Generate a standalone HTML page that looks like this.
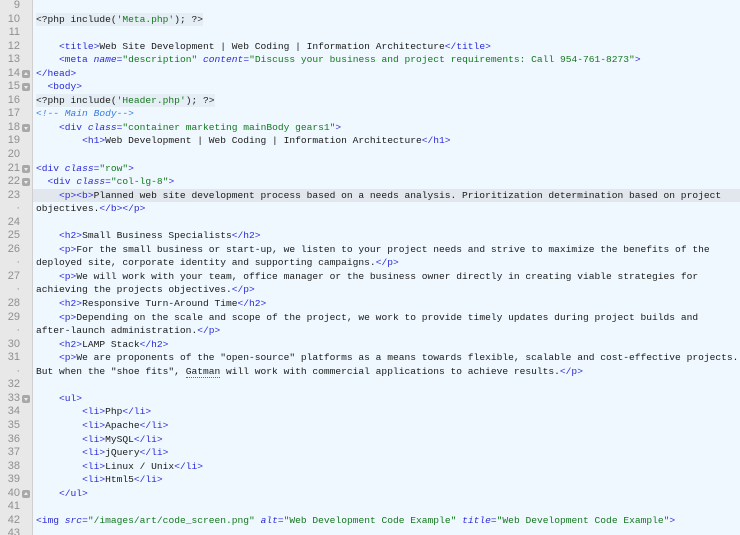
<!DOCTYPE html>
<html><head><meta charset="utf-8"><style>
html,body{margin:0;padding:0;width:740px;height:535px;overflow:hidden;background:#eff8ff;}
body{font-family:"Liberation Mono",monospace;font-size:9.6px;color:#1a1a1a;position:relative;}
#g{position:absolute;left:0;top:0;width:32px;height:535px;background:#e8e8e8;border-right:1px solid #cfcfcf;}
#c{position:absolute;left:0;top:-1px;width:740px;}
.r{height:13.56px;line-height:13.56px;white-space:pre;position:relative;}
.n{position:absolute;left:0;width:20px;text-align:right;color:#909090;font-family:"Liberation Sans",sans-serif;font-size:11px;}
.f{position:absolute;left:22px;top:3px;width:8px;height:8px;background:#a8a8a8;border-radius:2px;}
.f::after{content:"";position:absolute;left:2px;top:3px;border-left:2px solid transparent;border-right:2px solid transparent;border-top:3px solid #eee;}
.f.u::after{border-top:none;border-bottom:3px solid #eee;top:2px;}
.t{position:absolute;left:36px;}
.hl{background:#e6eef5;}
.cur{position:absolute;left:33px;right:0;top:0;height:13.56px;background:#e1e7ed;}
b,.k{color:#2a2ad6;font-weight:normal;}
i{color:#2a2ad6;}
.s{color:#14781e;}
.cm{color:#3a7ee0;font-style:italic;}
.sq{border-bottom:1px dotted #e03030;}
</style></head><body>
<div id="g"></div>
<div id="c">
<div class="r"><span class="n">9</span></div>
<div class="r"><span class="n">10</span><span class="t hl">&lt;?php include(<span class="s">'Meta.php'</span>); ?&gt;</span></div>
<div class="r"><span class="n">11</span></div>
<div class="r"><span class="n">12</span><span class="t">    <b>&lt;title&gt;</b>Web Site Development | Web Coding | Information Architecture<b>&lt;/title&gt;</b></span></div>
<div class="r"><span class="n">13</span><span class="t">    <b>&lt;meta</b> <i>name</i><b>=</b><span class="s">"description"</span> <i>content</i><b>=</b><span class="s">"Discuss your business and project requirements: Call 954-761-8273"</span><b>&gt;</b></span></div>
<div class="r"><span class="n">14</span><span class="f u"></span><span class="t"><b>&lt;/head&gt;</b></span></div>
<div class="r"><span class="n">15</span><span class="f"></span><span class="t">  <b>&lt;body&gt;</b></span></div>
<div class="r"><span class="n">16</span><span class="t hl">&lt;?php include(<span class="s">'Header.php'</span>); ?&gt;</span></div>
<div class="r"><span class="n">17</span><span class="t cm">&lt;!-- Main Body--&gt;</span></div>
<div class="r"><span class="n">18</span><span class="f"></span><span class="t">    <b>&lt;div</b> <i>class</i><b>=</b><span class="s">"container marketing mainBody gears1"</span><b>&gt;</b></span></div>
<div class="r"><span class="n">19</span><span class="t">        <b>&lt;h1&gt;</b>Web Development | Web Coding | Information Architecture<b>&lt;/h1&gt;</b></span></div>
<div class="r"><span class="n">20</span></div>
<div class="r"><span class="n">21</span><span class="f"></span><span class="t"><b>&lt;div</b> <i>class</i><b>=</b><span class="s">"row"</span><b>&gt;</b></span></div>
<div class="r"><span class="n">22</span><span class="f"></span><span class="t">  <b>&lt;div</b> <i>class</i><b>=</b><span class="s">"col-lg-8"</span><b>&gt;</b></span></div>
<div class="r"><span class="cur"></span><span class="n">23</span><span class="t">    <b>&lt;p&gt;&lt;b&gt;</b>Planned web site development process based on a needs analysis. Prioritization determination based on project</span></div>
<div class="r"><span class="n">·</span><span class="t">objectives.<b>&lt;/b&gt;&lt;/p&gt;</b></span></div>
<div class="r"><span class="n">24</span></div>
<div class="r"><span class="n">25</span><span class="t">    <b>&lt;h2&gt;</b>Small Business Specialists<b>&lt;/h2&gt;</b></span></div>
<div class="r"><span class="n">26</span><span class="t">    <b>&lt;p&gt;</b>For the small business or start-up, we listen to your project needs and strive to maximize the benefits of the</span></div>
<div class="r"><span class="n">·</span><span class="t">deployed site, corporate identity and supporting campaigns.<b>&lt;/p&gt;</b></span></div>
<div class="r"><span class="n">27</span><span class="t">    <b>&lt;p&gt;</b>We will work with your team, office manager or the business owner directly in creating viable strategies for</span></div>
<div class="r"><span class="n">·</span><span class="t">achieving the projects objectives.<b>&lt;/p&gt;</b></span></div>
<div class="r"><span class="n">28</span><span class="t">    <b>&lt;h2&gt;</b>Responsive Turn-Around Time<b>&lt;/h2&gt;</b></span></div>
<div class="r"><span class="n">29</span><span class="t">    <b>&lt;p&gt;</b>Depending on the scale and scope of the project, we work to provide timely updates during project builds and</span></div>
<div class="r"><span class="n">·</span><span class="t">after-launch administration.<b>&lt;/p&gt;</b></span></div>
<div class="r"><span class="n">30</span><span class="t">    <b>&lt;h2&gt;</b>LAMP Stack<b>&lt;/h2&gt;</b></span></div>
<div class="r"><span class="n">31</span><span class="t">    <b>&lt;p&gt;</b>We are proponents of the "open-source" platforms as a means towards flexible, scalable and cost-effective projects.</span></div>
<div class="r"><span class="n">·</span><span class="t">But when the "shoe fits", <span class="sq">Gatman</span> will work with commercial applications to achieve results.<b>&lt;/p&gt;</b></span></div>
<div class="r"><span class="n">32</span></div>
<div class="r"><span class="n">33</span><span class="f"></span><span class="t">    <b>&lt;ul&gt;</b></span></div>
<div class="r"><span class="n">34</span><span class="t">        <b>&lt;li&gt;</b>Php<b>&lt;/li&gt;</b></span></div>
<div class="r"><span class="n">35</span><span class="t">        <b>&lt;li&gt;</b>Apache<b>&lt;/li&gt;</b></span></div>
<div class="r"><span class="n">36</span><span class="t">        <b>&lt;li&gt;</b>MySQL<b>&lt;/li&gt;</b></span></div>
<div class="r"><span class="n">37</span><span class="t">        <b>&lt;li&gt;</b>jQuery<b>&lt;/li&gt;</b></span></div>
<div class="r"><span class="n">38</span><span class="t">        <b>&lt;li&gt;</b>Linux / Unix<b>&lt;/li&gt;</b></span></div>
<div class="r"><span class="n">39</span><span class="t">        <b>&lt;li&gt;</b>Html5<b>&lt;/li&gt;</b></span></div>
<div class="r"><span class="n">40</span><span class="f u"></span><span class="t">    <b>&lt;/ul&gt;</b></span></div>
<div class="r"><span class="n">41</span></div>
<div class="r"><span class="n">42</span><span class="t"><b>&lt;img</b> <i>src</i><b>=</b><span class="s">"/images/art/code_screen.png"</span> <i>alt</i><b>=</b><span class="s">"Web Development Code Example"</span> <i>title</i><b>=</b><span class="s">"Web Development Code Example"</span><b>&gt;</b></span></div>
<div class="r"><span class="n">43</span></div>
</div>
</body></html>
